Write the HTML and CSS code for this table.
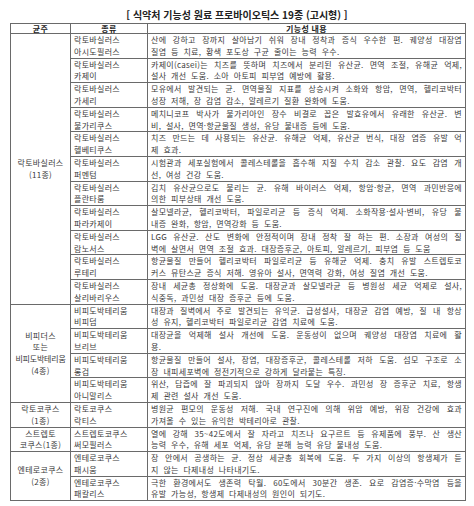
FILE: index.html
```html
<!DOCTYPE html>
<html lang="ko">
<head>
<meta charset="utf-8">
<title>식약처 기능성 원료 프로바이오틱스 19종</title>
<link rel="stylesheet" href="styles.css">
</head>
<body>
<h1 class="title">[ 식약처 기능성 원료 프로바이오틱스 19종 (고시형) ]</h1>
<table class="probiotics">
  <colgroup>
    <col class="c-genus">
    <col class="c-kind">
    <col class="c-desc">
  </colgroup>
  <thead>
    <tr><th>균주</th><th>종류</th><th>기능성 내용</th></tr>
  </thead>
  <tbody>
    <tr>
      <td class="genus" rowspan="11">락토바실러스<br>(11종)</td>
      <td class="kind">락토바실러스<br>아시도필러스</td>
      <td class="desc"><div class="j">산에 강하고 장까지 살아남기 쉬워 장내 정착과 증식 우수한 편. 궤양성 대장염</div><div class="l">질염 등 치료, 황색 포도상 구균 줄이는 능력 우수.</div></td>
    </tr>
    <tr>
      <td class="kind">락토바실러스<br>카제이</td>
      <td class="desc"><div class="j">카제이(casei)는 치즈를 뜻하며 치즈에서 분리된 유산균. 면역 조절, 유해균 억제,</div><div class="l">설사 개선 도움. 소아 아토피 피부염 예방에 활용.</div></td>
    </tr>
    <tr>
      <td class="kind">락토바실러스<br>가세리</td>
      <td class="desc"><div class="j">모유에서 발견되는 균. 면역물질 지표를 상승시켜 소화와 항암, 면역, 헬리코박터</div><div class="l">성장 저해, 장 감염 감소, 알레르기 질환 완화에 도움.</div></td>
    </tr>
    <tr>
      <td class="kind">락토바실러스<br>불가리쿠스</td>
      <td class="desc"><div class="j">메치니코프 박사가 불가리아인 장수 비결로 꼽은 발효유에서 유래한 유산균. 변</div><div class="l">비, 설사, 면역·항균물질 생성, 유당 불내증 등에 도움.</div></td>
    </tr>
    <tr>
      <td class="kind">락토바실러스<br>헬베티쿠스</td>
      <td class="desc"><div class="j">치즈 만드는 데 사용되는 유산균. 유해균 억제, 유산균 번식, 대장 염증 유발 억</div><div class="l">제 효과.</div></td>
    </tr>
    <tr>
      <td class="kind">락토바실러스<br>퍼멘텀</td>
      <td class="desc"><div class="j">시험관과 세포실험에서 콜레스테롤을 흡수해 지질 수치 감소 관찰. 요도 감염 개</div><div class="l">선, 여성 건강 도움.</div></td>
    </tr>
    <tr>
      <td class="kind">락토바실러스<br>플란타룸</td>
      <td class="desc"><div class="j">김치 유산균으로도 불리는 균. 유해 바이러스 억제, 항암·항균, 면역 과민반응에</div><div class="l">의한 피부상태 개선 도움.</div></td>
    </tr>
    <tr>
      <td class="kind">락토바실러스<br>파라카제이</td>
      <td class="desc"><div class="j">살모넬라균, 헬리코박터, 파일로리균 등 증식 억제. 소화작용·설사·변비, 유당 불</div><div class="l">내증 완화, 항암, 면역강화 등 도움.</div></td>
    </tr>
    <tr>
      <td class="kind">락토바실러스<br>람노서스</td>
      <td class="desc"><div class="j">LGG 유산균. 산도 변화에 안정적이며 장내 정착 잘 하는 편. 소장과 여성의 질</div><div class="l">벽에 살면서 면역 조절 효과. 대장증후군, 아토피, 알레르기, 피부염 등 도움</div></td>
    </tr>
    <tr>
      <td class="kind">락토바실러스<br>루테리</td>
      <td class="desc"><div class="j">항균물질 만들어 헬리코박터 파일로리균 등 유해균 억제. 충치 유발 스트렙토코</div><div class="l">커스 뮤탄스균 증식 저해. 영유아 설사, 면역력 강화, 여성 질염 개선 도움.</div></td>
    </tr>
    <tr>
      <td class="kind">락토바실러스<br>살리바리우스</td>
      <td class="desc"><div class="j">장내 세균총 정상화에 도움. 대장균과 살모넬라균 등 병원성 세균 억제로 설사,</div><div class="l">식중독, 과민성 대장 증후군 등에 도움.</div></td>
    </tr>
    <tr>
      <td class="genus" rowspan="4">비피더스<br>또는<br><span class="tight">비피도박테리움</span><br>(4종)</td>
      <td class="kind">비피도박테리움<br>비피덤</td>
      <td class="desc"><div class="j">대장과 질벽에서 주로 발견되는 유익균. 급성설사, 대장균 감염 예방, 질 내 항상</div><div class="l">성 유지, 헬리코박터 파일로리균 감염 치료에 도움.</div></td>
    </tr>
    <tr>
      <td class="kind">비피도박테리움<br>브리브</td>
      <td class="desc"><div class="j">대장균을 억제해 설사 개선에 도움. 운동성이 없으며 궤양성 대장염 치료에 활</div><div class="l">용.</div></td>
    </tr>
    <tr>
      <td class="kind">비피도박테리움<br>롱검</td>
      <td class="desc"><div class="j">항균물질 만들어 설사, 장염, 대장증후군, 콜레스테롤 저하 도움. 섬모 구조로 소</div><div class="l">장 내피세포벽에 정전기적으로 강하게 달라붙는 특징.</div></td>
    </tr>
    <tr>
      <td class="kind">비피도박테리움<br>아니말리스</td>
      <td class="desc"><div class="j">위산, 담즙에 잘 파괴되지 않아 장까지 도달 우수. 과민성 장 증후군 치료, 항생</div><div class="l">제 관련 설사 개선 도움.</div></td>
    </tr>
    <tr>
      <td class="genus">락토코쿠스<br>(1종)</td>
      <td class="kind">락토코쿠스<br>락티스</td>
      <td class="desc"><div class="j">병원균 편모의 운동성 저해. 국내 연구진에 의해 위암 예방, 위장 건강에 효과</div><div class="l">가져올 수 있는 유익한 박테리아로 관찰.</div></td>
    </tr>
    <tr>
      <td class="genus">스트렙토<br>코쿠스(1종)</td>
      <td class="kind">스트렙토코쿠스<br>써모필러스</td>
      <td class="desc"><div class="j">열에 강해 35~42도에서 잘 자라고 치즈나 요구르트 등 유제품에 풍부. 산 생산</div><div class="l">능력 우수, 유해 세포 억제, 유당 분해 능력 유당 불내성 도움.</div></td>
    </tr>
    <tr>
      <td class="genus" rowspan="2">엔테로코쿠스<br>(2종)</td>
      <td class="kind">엔테로코쿠스<br>패시움</td>
      <td class="desc"><div class="j">장 안에서 공생하는 균. 정상 세균총 회복에 도움. 두 가지 이상의 항생제가 듣</div><div class="l">지 않는 다제내성 나타내기도.</div></td>
    </tr>
    <tr>
      <td class="kind">엔테로코쿠스<br>패칼리스</td>
      <td class="desc"><div class="j">극한 환경에서도 생존력 탁월. 60도에서 30분간 생존. 요로 감염증·수막염 등을</div><div class="l">유발 가능성, 항생제 다제내성의 원인이 되기도.</div></td>
    </tr>
  </tbody>
</table>
</body>
</html>
```

FILE: styles.css
```css
html, body {
  margin: 0;
  padding: 0;
  background: #ffffff;
}

body {
  font-family: "Noto Sans CJK KR", "Noto Sans", sans-serif;
  color: #3a3a3a;
}

.title {
  margin: 9px 0 2px;
  font-size: 10px;
  line-height: 12px;
  font-weight: bold;
  text-align: center;
  color: #222;
}

.probiotics {
  margin-left: 10px;
  width: 455px;
  table-layout: fixed;
  border-collapse: collapse;
  border: 1px solid #555;
  font-size: 8px;
  line-height: 11.8px;
  letter-spacing: 0.3px;
}

.c-genus { width: 60px; }
.c-kind { width: 77px; }
.c-desc { width: 318px; }

.probiotics th,
.probiotics td {
  border: 1px solid #6a6a6a;
  padding: 0 3px;
  vertical-align: middle;
}

.probiotics th {
  font-weight: bold;
  line-height: 9px;
  color: #222;
  text-align: center;
}

.genus {
  text-align: center;
  white-space: nowrap;
}

.probiotics td.genus {
  padding: 0;
}

.genus .tight {
  letter-spacing: -0.2px;
}

.kind {
  text-align: left;
}

.desc .j {
  text-align: justify;
  text-align-last: justify;
  white-space: nowrap;
}

.desc .l {
  word-spacing: 2.2px;
  white-space: nowrap;
}
```
